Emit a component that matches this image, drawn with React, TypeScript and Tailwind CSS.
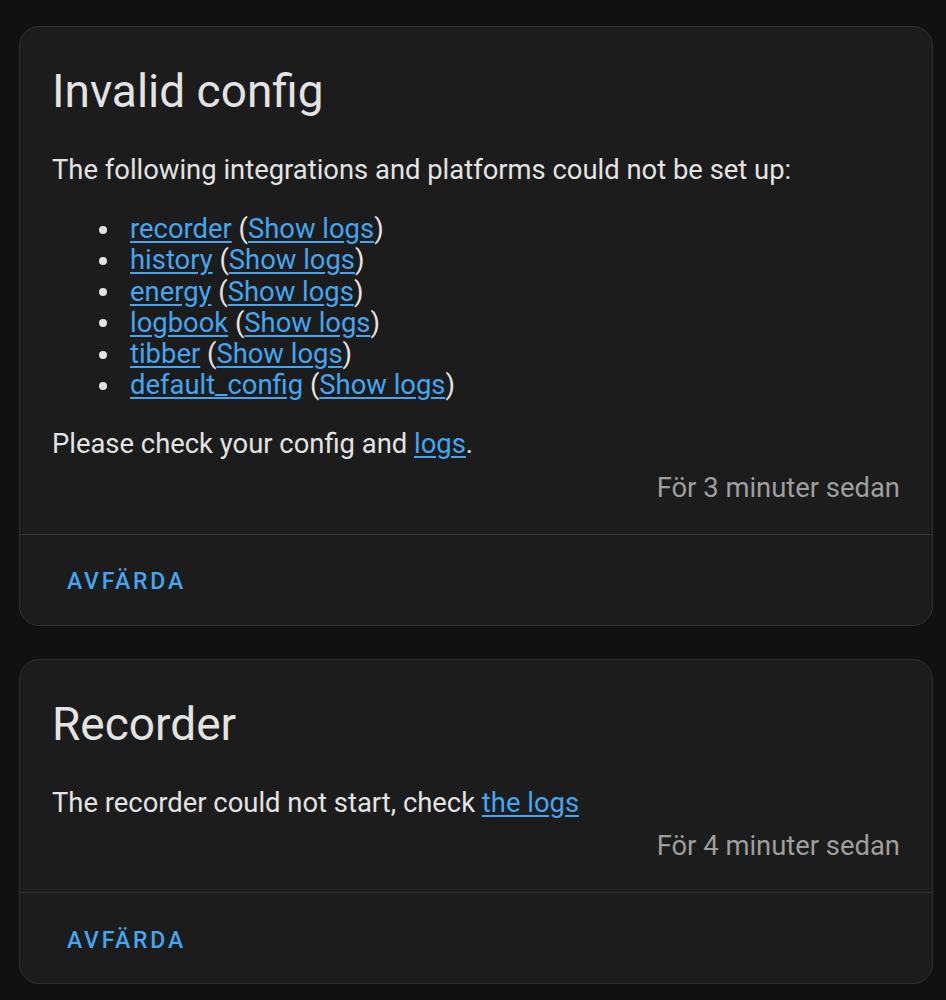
import React from 'react';

interface Failure {
  name: string;
}

const failures: Failure[] = [
  { name: 'recorder' },
  { name: 'history' },
  { name: 'energy' },
  { name: 'logbook' },
  { name: 'tibber' },
  { name: 'default_config' },
];

const Link: React.FC<{ children: React.ReactNode }> = ({ children }) => (
  <a href="#" className="text-[#44a6f0] underline underline-offset-[3px]">
    {children}
  </a>
);

const NotificationCard: React.FC<{
  title: string;
  time: string;
  children: React.ReactNode;
}> = ({ title, time, children }) => (
  <div className="w-[914px] rounded-[20px] border border-[#2f2f2f] bg-[#1c1c1c]">
    <div className="px-[32px] pt-[36px] pb-[30px]">
      <h1 className="text-[46px] leading-[56px] font-normal text-[#e3e3e3]">{title}</h1>
      <div className="mt-[36px]">{children}</div>
      <div className="mt-[12px] text-right text-[#9e9e9e]">{time}</div>
    </div>
    {/* Actions */}
    <div className="flex h-[91px] items-center border-t border-[#333333] pt-[4px] pl-[47px]">
      <button className="text-[23px] font-medium uppercase tracking-[0.12em] text-[#44a6f0]">
        Avfärda
      </button>
    </div>
  </div>
);

export default function App() {
  return (
    <div
      className="min-h-screen bg-[#111111] pt-[26px] pl-[19px] pb-[20px] text-[27.4px] leading-[31.2px] text-[#e3e3e3]"
      style={{ fontFamily: 'Roboto, "Noto Sans", sans-serif' }}
    >
      <div className="flex flex-col gap-[33px]">
        <NotificationCard title="Invalid config" time="För 3 minuter sedan">
          <p>The following integrations and platforms could not be set up:</p>
          <ul className="mt-[28px] pl-[47px]">
            {failures.map((f) => (
              <li key={f.name} className="flex items-center">
                <span className="mr-[23px] h-[8px] w-[8px] shrink-0 rounded-full bg-[#e3e3e3]" />
                <span>
                  <Link>{f.name}</Link> (<Link>Show logs</Link>)
                </span>
              </li>
            ))}
          </ul>
          <p className="mt-[28px]">
            Please check your config and <Link>logs</Link>.
          </p>
        </NotificationCard>

        <NotificationCard title="Recorder" time="För 4 minuter sedan">
          <p>
            The recorder could not start, check <Link>the logs</Link>
          </p>
        </NotificationCard>
      </div>
    </div>
  );
}
